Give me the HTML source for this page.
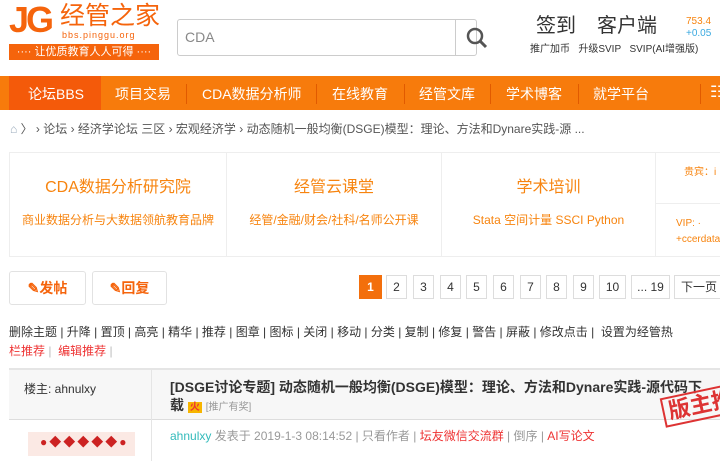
<!DOCTYPE html><html><head><meta charset="utf-8"><style>
body{margin:0;width:720px;height:461px;overflow:hidden;background:#fff;font-family:"Liberation Sans","Noto Sans CJK SC",sans-serif;position:relative}
.a{position:absolute;white-space:nowrap;line-height:1.2}
.nav{position:absolute;left:0;top:76px;width:720px;height:34px;background:#f77b0c}
.nav span{position:absolute;top:8px;color:#fff;font-size:14px}
.dv{position:absolute;top:8px;width:1px;height:20px;background:#e15a00}
.box{position:absolute;top:152px;height:105px;border:1px solid #eee;box-sizing:border-box;text-align:center;color:#f7840f}
.box b{display:block;font-weight:normal;font-size:16px;margin-top:20px}
.box i{display:block;font-style:normal;font-size:12px;margin-top:14px}
.pg{position:absolute;top:275px;height:24px;border:1px solid #ddd;box-sizing:border-box;font-size:12px;color:#333;text-align:center;line-height:22px}
</style></head><body>
<div class="a" style="left:9px;top:2px;color:#f5640c;font-size:36px;font-weight:bold;letter-spacing:-3px;line-height:1">JG</div>
<div class="a" style="left:60px;top:4px;color:#f5640c;font-size:25px;line-height:1">经管之家</div>
<div class="a" style="left:62px;top:31px;color:#f5640c;font-size:9px;letter-spacing:1px;line-height:1">bbs.pinggu.org</div>
<div class="a" style="left:9px;top:44px;width:150px;height:16px;background:#f5640c;color:#fff;font-size:11px;text-align:center;line-height:16px">···· 让优质教育人人可得 ····</div>
<div class="a" style="left:177px;top:19px;width:300px;height:37px;border:1px solid #ccc;border-radius:3px;box-sizing:border-box"></div>
<div class="a" style="left:185px;top:29px;font-size:14px;color:#888">CDA</div>
<div class="a" style="left:455px;top:20px;width:1px;height:35px;background:#ccc"></div>
<svg class="a" style="left:464px;top:25px" width="26" height="26"><circle cx="11" cy="11" r="7" stroke="#555" stroke-width="2.5" fill="none"/><line x1="16" y1="16" x2="22" y2="22" stroke="#555" stroke-width="3"/></svg>
<div class="a" style="left:536px;top:14px;font-size:20px;color:#333">签到</div>
<div class="a" style="left:597px;top:14px;font-size:20px;color:#333">客户端</div>
<div class="a" style="left:686px;top:16px;font-size:10px;color:#f7840f">753.4</div>
<div class="a" style="left:686px;top:28px;font-size:10px;color:#3aa9e0">+0.05</div>
<div class="a" style="left:530px;top:44px;font-size:10px;color:#333">推广加币&nbsp;&nbsp; 升级SVIP&nbsp;&nbsp; SVIP(AI增强版)</div>
<div class="nav"><div class="a" style="left:9px;top:0;width:92px;height:34px;background:#f45a0a"></div>
<span style="left:28px">论坛BBS</span><span style="left:115px">项目交易</span><div class="dv" style="left:186px"></div>
<span style="left:202px">CDA数据分析师</span><div class="dv" style="left:316px"></div><span style="left:332px">在线教育</span><div class="dv" style="left:404px"></div>
<span style="left:419px">经管文库</span><div class="dv" style="left:490px"></div><span style="left:506px">学术博客</span><div class="dv" style="left:578px"></div>
<span style="left:593px">就学平台</span><div class="dv" style="left:700px"></div><span style="left:710px;top:6px;font-size:16px">☷</span></div>
<div class="a" style="left:10px;top:122px;font-size:12px;color:#555"><span style="color:#9ab">⌂</span> 〉 › 论坛 › 经济学论坛 三区 › 宏观经济学 › 动态随机一般均衡(DSGE)模型：理论、方法和Dynare实践-源 ...</div>
<div class="box" style="left:9px;width:218px"><b>CDA数据分析研究院</b><i>商业数据分析与大数据领航教育品牌</i></div>
<div class="box" style="left:226px;width:216px"><b>经管云课堂</b><i>经管/金融/财会/社科/名师公开课</i></div>
<div class="box" style="left:441px;width:215px"><b>学术培训</b><i>Stata 空间计量 SSCI Python</i></div>
<div class="box" style="left:655px;width:80px;height:52px;text-align:left;padding:10px 0 0 28px;font-size:10px">贵宾：i</div>
<div class="box" style="left:655px;top:203px;width:80px;height:54px;text-align:left;padding:12px 0 0 20px;font-size:10px;line-height:16px">VIP: ·<br>+ccerdata</div>
<div class="a" style="left:9px;top:271px;width:77px;height:34px;border:1px solid #e2e2e2;border-radius:3px;box-sizing:border-box;color:#f5640c;font-size:14px;font-weight:bold;line-height:32px;text-align:center">✎发帖</div>
<div class="a" style="left:92px;top:271px;width:75px;height:34px;border:1px solid #e2e2e2;border-radius:3px;box-sizing:border-box;color:#f5640c;font-size:14px;font-weight:bold;line-height:32px;text-align:center">✎回复</div>
<div class="pg" style="left:359px;width:23px;background:#f36f0c;border-color:#f36f0c;color:#fff;font-weight:bold">1</div>
<div class="pg" style="left:386px;width:21px">2</div><div class="pg" style="left:413px;width:21px">3</div><div class="pg" style="left:440px;width:21px">4</div><div class="pg" style="left:466px;width:21px">5</div><div class="pg" style="left:493px;width:21px">6</div><div class="pg" style="left:520px;width:21px">7</div><div class="pg" style="left:546px;width:21px">8</div><div class="pg" style="left:573px;width:21px">9</div><div class="pg" style="left:599px;width:27px">10</div><div class="pg" style="left:631px;width:39px">... 19</div><div class="pg" style="left:674px;width:50px">下一页</div>
<div class="a" style="left:9px;top:325px;font-size:12px;color:#333">删除主题 | 升降 | 置顶 | 高亮 | 精华 | 推荐 | 图章 | 图标 | 关闭 | 移动 | 分类 | 复制 | 修复 | 警告 | 屏蔽 | 修改点击 |&nbsp; 设置为经管热</div>
<div class="a" style="left:9px;top:344px;font-size:12px;color:#e33">栏推荐 <span style="color:#bbb">|</span>&nbsp; 编辑推荐 <span style="color:#bbb">|</span></div>
<div class="a" style="left:9px;top:368px;width:720px;height:49px;background:#f7f7f7;border-top:2px solid #e5e5e5;border-bottom:1px solid #ddd"></div>
<div class="a" style="left:151px;top:370px;width:1px;height:91px;background:#e5e5e5"></div>
<div class="a" style="left:24px;top:382px;font-size:12px;color:#333">楼主: ahnulxy</div>
<div class="a" style="left:170px;top:379px;font-size:14px;font-weight:bold;color:#333">[DSGE讨论专题] 动态随机一般均衡(DSGE)模型：理论、方法和Dynare实践-源代码下</div>
<div class="a" style="left:170px;top:397px;font-size:14px;font-weight:bold;color:#333">载 <span style="background:#f7b500;color:#e33;font-size:10px;padding:0 2px">火</span> <span style="font-size:10px;color:#999;font-weight:normal">[推广有奖]</span></div>
<div class="a" style="left:28px;top:432px;width:107px;height:24px;background:#fbe9e4"></div>
<div class="a" style="left:40px;top:435px;font-size:12px;color:#c22;letter-spacing:2px">●◆◆◆◆◆●</div>
<div class="a" style="left:170px;top:429px;font-size:12px;color:#999"><span style="color:#3bb">ahnulxy</span> 发表于 2019-1-3 08:14:52 | 只看作者 | <span style="color:#e33">坛友微信交流群</span> | 倒序 | <span style="color:#e33">AI写论文</span></div>
<div class="a" style="left:662px;top:390px;font-size:22px;font-weight:bold;color:#d33;border:2px solid #d33;transform:rotate(-12deg);padding:0 4px">版主推</div>
</body></html>
